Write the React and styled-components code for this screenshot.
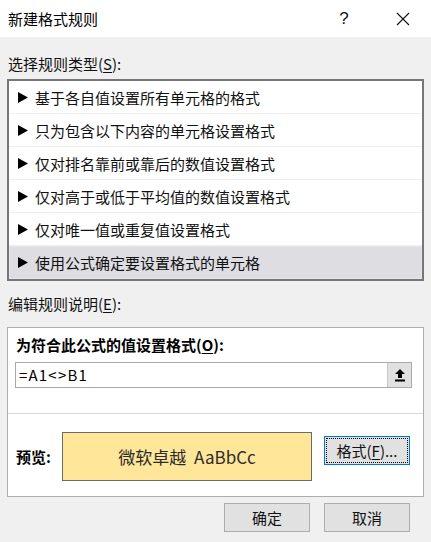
import React from 'react';
import styled, { createGlobalStyle } from 'styled-components';

const GlobalStyle = createGlobalStyle`
  html, body {
    margin: 0;
    padding: 0;
    background: #f0f0f0;
  }
  body {
    font-family: "Noto Sans CJK SC", "Noto Sans", sans-serif;
    color: #000;
  }
`;

const Dialog = styled.div`
  width: 431px;
  height: 542px;
  background: #f0f0f0;
  display: flex;
  flex-direction: column;
  overflow: hidden;
`;

const TitleBar = styled.div`
  height: 37px;
  background: #fff;
  display: flex;
  align-items: center;
  padding-left: 8px;
  font-size: 15px;
`;

const Title = styled.div`
  flex: 1;
  line-height: 20px;
  margin-top: 1px;
`;

const TitleBtn = styled.div`
  width: ${p => p.$w}px;
  margin-right: ${p => p.$mr}px;
  height: 37px;
  display: flex;
  align-items: center;
  justify-content: center;
  font-family: "Liberation Sans", sans-serif;
  font-size: 17px;
  color: #111;
`;

const Body = styled.div`
  padding: 0 7px;
  display: flex;
  flex-direction: column;
`;

const Label = styled.div`
  font-size: 15px;
  line-height: 20px;
  height: 20px;
  margin-top: ${p => p.$top}px;
  margin-bottom: ${p => p.$bottom}px;
  padding-left: 1px;
  color: #111;
  u { text-decoration: underline; text-underline-offset: 2px; }
`;

const ListBox = styled.div`
  border: 2px solid #767676;
  background: #fff;
  display: flex;
  flex-direction: column;
`;

const Item = styled.div`
  height: 33px;
  box-sizing: border-box;
  display: flex;
  align-items: center;
  padding-left: 9px;
  font-size: 15px;
  color: #111;
  background: ${p => (p.$active ? '#dddde2' : '#fff')};
  border-bottom: ${p => (p.$last ? 'none' : '1px solid #eeeeee')};
  box-shadow: ${p => (p.$active ? 'inset 0 0 0 1px #e6e6ea' : 'none')};
`;

const Arrow = styled.svg`
  width: 10px;
  height: 11px;
  margin-right: 7px;
  flex: none;
`;

const RuleBox = styled.div`
  height: 170px;
  box-sizing: border-box;
  border: 1px solid #adadad;
  background: #fff;
  display: flex;
  flex-direction: column;
`;

const RuleHead = styled.div`
  font-size: 15px;
  font-weight: bold;
  line-height: 20px;
  margin: 7px 0 0 8px;
  u { text-decoration: underline; text-underline-offset: 2px; }
`;

const InputRow = styled.div`
  margin: 7px 11px 0 7px;
  height: 26px;
  box-sizing: border-box;
  border: 1px solid #a9a9a9;
  display: flex;
  align-items: stretch;
`;

const InputText = styled.div`
  flex: 1;
  font-size: 15px;
  line-height: 24px;
  padding-left: 3px;
  letter-spacing: 1.2px;
`;

const RefButton = styled.div`
  width: 23px;
  background: #e1e1e1;
  border-left: 1px solid #c8c8c8;
  display: flex;
  align-items: center;
  justify-content: center;
`;

const Divider = styled.div`
  height: 1px;
  background: #d9d9d9;
  margin-top: 25px;
`;

const PreviewRow = styled.div`
  flex: 1;
  display: flex;
  align-items: center;
  padding-left: 8px;
  padding-top: 2px;
`;

const PreviewLabel = styled.div`
  width: 46px;
  font-size: 15px;
  font-weight: bold;
`;

const PreviewBox = styled.div`
  width: 250px;
  height: 49px;
  box-sizing: border-box;
  border: 1px solid #6b6b6b;
  background: #ffe699;
  display: flex;
  align-items: center;
  justify-content: center;
  font-size: 17px;
  color: #2b2b2b;
  word-spacing: 4px;
`;

const Button = styled.div`
  width: ${p => p.$w || 86}px;
  height: 29px;
  box-sizing: border-box;
  background: #e1e1e1;
  border: 1px solid ${p => (p.$focus ? '#0078d7' : '#adadad')};
  display: flex;
  align-items: center;
  justify-content: center;
  font-size: 15px;
  color: #111;
  position: relative;
  u { text-decoration: underline; text-underline-offset: 2px; }
  &::after {
    content: '';
    display: ${p => (p.$focus ? 'block' : 'none')};
    position: absolute;
    inset: 1px;
    border: 1px dotted #000;
  }
`;

const FormatButton = styled(Button)`
  margin-left: 12px;
  margin-top: -11px;
`;

const Footer = styled.div`
  display: flex;
  justify-content: flex-end;
  gap: 14px;
  padding: 6px 14px 0 0;
`;

const rules = [
  '基于各自值设置所有单元格的格式',
  '只为包含以下内容的单元格设置格式',
  '仅对排名靠前或靠后的数值设置格式',
  '仅对高于或低于平均值的数值设置格式',
  '仅对唯一值或重复值设置格式',
  '使用公式确定要设置格式的单元格',
];

const UploadIcon = () => (
  <svg width="12" height="14" viewBox="0 0 12 14">
    <path d="M6 1 L11 6 L8 6 L8 10 L4 10 L4 6 L1 6 Z" fill="#000" />
    <rect x="1" y="11.5" width="10" height="2" fill="#000" />
  </svg>
);

export default function App() {
  return (
    <Dialog>
      <GlobalStyle />
      <TitleBar>
        <Title>新建格式规则</Title>
        <TitleBtn $w={30} $mr={30}>?</TitleBtn>
        <TitleBtn $w={28} $mr={14}>
          <svg width="14" height="14" viewBox="0 0 14 14">
            <path d="M1 1 L13 13 M13 1 L1 13" stroke="#111" strokeWidth="1.1" />
          </svg>
        </TitleBtn>
      </TitleBar>
      <Body>
        <Label $top={17} $bottom={5}>选择规则类型(<u>S</u>):</Label>
        <ListBox>
          {rules.map((r, i) => (
            <Item key={r} $active={i === rules.length - 1} $last={i === rules.length - 1}>
              <Arrow viewBox="0 0 10 11">
                <path d="M0 0 L10 5.5 L0 11 Z" fill="#000" />
              </Arrow>
              {r}
            </Item>
          ))}
        </ListBox>
        <Label $top={13} $bottom={13}>编辑规则说明(<u>E</u>):</Label>
        <RuleBox>
          <RuleHead>为符合此公式的值设置格式(<u>O</u>):</RuleHead>
          <InputRow>
            <InputText>=A1&lt;&gt;B1</InputText>
            <RefButton>
              <UploadIcon />
            </RefButton>
          </InputRow>
          <Divider />
          <PreviewRow>
            <PreviewLabel>预览:</PreviewLabel>
            <PreviewBox>微软卓越 AaBbCc</PreviewBox>
            <FormatButton $focus>格式(<u>F</u>)...</FormatButton>
          </PreviewRow>
        </RuleBox>
        <Footer>
          <Button>确定</Button>
          <Button>取消</Button>
        </Footer>
      </Body>
    </Dialog>
  );
}
